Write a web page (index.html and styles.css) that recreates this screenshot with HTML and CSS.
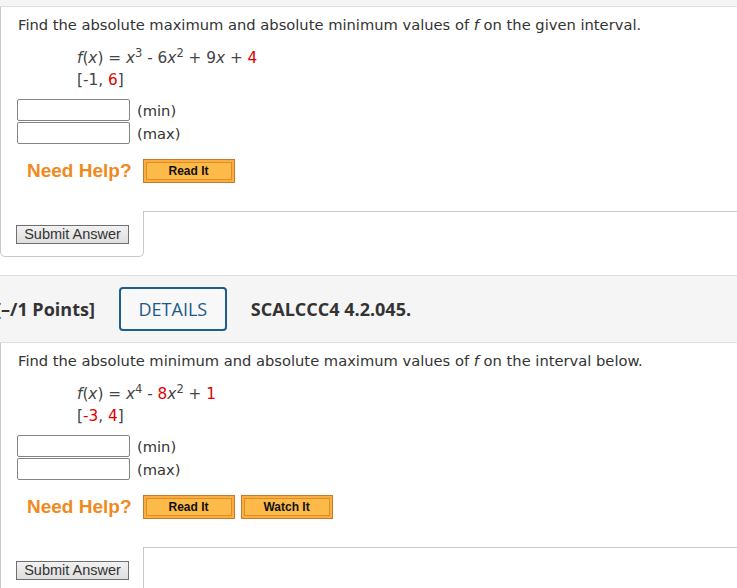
FILE: index.html
```html
<!DOCTYPE html>
<html>
<head>
<meta charset="utf-8">
<link rel="stylesheet" href="styles.css">
</head>
<body>
<div class="topbar"></div>

<div class="card">
  <div class="q-text">Find the absolute maximum and absolute minimum values of <i>f</i> on the given interval.</div>
  <div class="formula">
    <div><i>f</i>(<i>x</i>) = <i>x</i><sup>3</sup> - 6<i>x</i><sup>2</sup> + 9<i>x</i> + <span class="red">4</span></div>
    <div>[-1, <span class="red">6</span>]</div>
  </div>
  <div class="answers">
    <div class="ans-row"><span class="box"></span><span class="lbl">(min)</span></div>
    <div class="ans-row"><span class="box"></span><span class="lbl">(max)</span></div>
  </div>
  <div class="help">
    <span class="need">Need Help?</span>
    <span class="hbtn"><span class="hbtn-in">Read It</span></span>
  </div>
</div>
<div class="footer">
  <div class="submit-cell"><span class="submit">Submit Answer</span></div>
  <div class="footer-rest"></div>
</div>

<div class="band">
  <span class="points">[–/1 Points]</span>
  <span class="details">DETAILS</span>
  <span class="code">SCALCCC4 4.2.045.</span>
</div>

<div class="card">
  <div class="q-text">Find the absolute minimum and absolute maximum values of <i>f</i> on the interval below.</div>
  <div class="formula">
    <div><i>f</i>(<i>x</i>) = <i>x</i><sup>4</sup> - <span class="red">8</span><i>x</i><sup>2</sup> + <span class="red">1</span></div>
    <div>[<span class="red">-3</span>, <span class="red">4</span>]</div>
  </div>
  <div class="answers">
    <div class="ans-row"><span class="box"></span><span class="lbl">(min)</span></div>
    <div class="ans-row"><span class="box"></span><span class="lbl">(max)</span></div>
  </div>
  <div class="help">
    <span class="need">Need Help?</span>
    <span class="hbtn"><span class="hbtn-in">Read It</span></span>
    <span class="hbtn"><span class="hbtn-in">Watch It</span></span>
  </div>
</div>
<div class="footer">
  <div class="submit-cell"><span class="submit">Submit Answer</span></div>
  <div class="footer-rest"></div>
</div>
</body>
</html>
```

FILE: styles.css
```css
html, body {
  margin: 0;
  padding: 0;
  background: #fff;
  overflow: hidden;
}
body {
  font-family: "DejaVu Sans", Verdana, sans-serif;
  font-size: 14.7px;
  color: #333;
}
.topbar {
  height: 6px;
  background: #f5f5f5;
  border-bottom: 1px solid #ddd;
}
.card {
  border-left: 1px solid #c8c8c8;
  padding: 7px 0 28px 0;
}
.q-text {
  padding-left: 17px;
  line-height: 21px;
}
.formula {
  margin-top: 12px;
  padding-left: 76px;
  line-height: 22px;
  font-size: 15.3px;
  color: #444;
}
.formula sup {
  font-size: 11.5px;
  line-height: 0;
  vertical-align: 6px;
}
.red {
  color: #e00000;
}
.answers {
  margin-top: 8px;
  padding-left: 16px;
  display: flex;
  flex-direction: column;
  gap: 1px;
}
.ans-row {
  display: flex;
  align-items: center;
  gap: 7px;
}
.box {
  display: block;
  width: 111px;
  height: 20px;
  border: 1px solid #858585;
  border-radius: 2px;
  background: #fff;
}
.lbl {
  color: #333;
}
.help {
  margin-top: 15px;
  padding-left: 26px;
  display: flex;
  align-items: center;
  gap: 6px;
  height: 24px;
}
.need {
  font-family: "Liberation Sans", Arial, sans-serif;
  font-weight: bold;
  font-size: 19px;
  color: #ef8a1e;
  margin-right: 5px;
}
.hbtn {
  display: block;
  width: 92px;
  height: 24px;
  box-sizing: border-box;
  border: 1px solid #c97a28;
  background: #fbae3e;
  padding: 2px;
}
.hbtn-in {
  display: flex;
  align-items: center;
  justify-content: center;
  height: 100%;
  box-sizing: border-box;
  border: 1px solid #d88f2f;
  background: #fdba48;
  font-family: "Liberation Sans", Arial, sans-serif;
  font-weight: bold;
  font-size: 12px;
  color: #111;
}
.footer {
  display: flex;
  height: 46px;
}
.submit-cell {
  width: 144px;
  box-sizing: border-box;
  border: 1px solid #c8c8c8;
  border-top: none;
  border-radius: 0 0 5px 5px;
  padding: 14px 0 0 15px;
}
.submit {
  display: inline-block;
  box-sizing: border-box;
  width: 113px;
  height: 19px;
  border: 1px solid #707070;
  background: linear-gradient(#f2f2f2, #dddddd);
  font-family: "Liberation Sans", Arial, sans-serif;
  font-size: 14.5px;
  color: #333;
  text-align: center;
  line-height: 17px;
}
.footer-rest {
  flex: 1;
  border-top: 1px solid #c8c8c8;
}
.band {
  margin-top: 18px;
  height: 66px;
  background: #f5f5f5;
  border-top: 1px solid #ddd;
  border-bottom: 1px solid #ddd;
  display: flex;
  align-items: center;
  font-family: "Open Sans", sans-serif;
  font-size: 18px;
  color: #333;
}
.points {
  font-weight: bold;
  margin-left: -5px;
}
.details {
  margin-left: 24px;
  width: 108px;
  height: 44px;
  box-sizing: border-box;
  border: 2px solid #1d5e8e;
  border-radius: 4px;
  display: flex;
  align-items: center;
  justify-content: center;
  color: #1d5a88;
  background: #f8f8f8;
}
.code {
  font-weight: bold;
  margin-left: 24px;
}
```
